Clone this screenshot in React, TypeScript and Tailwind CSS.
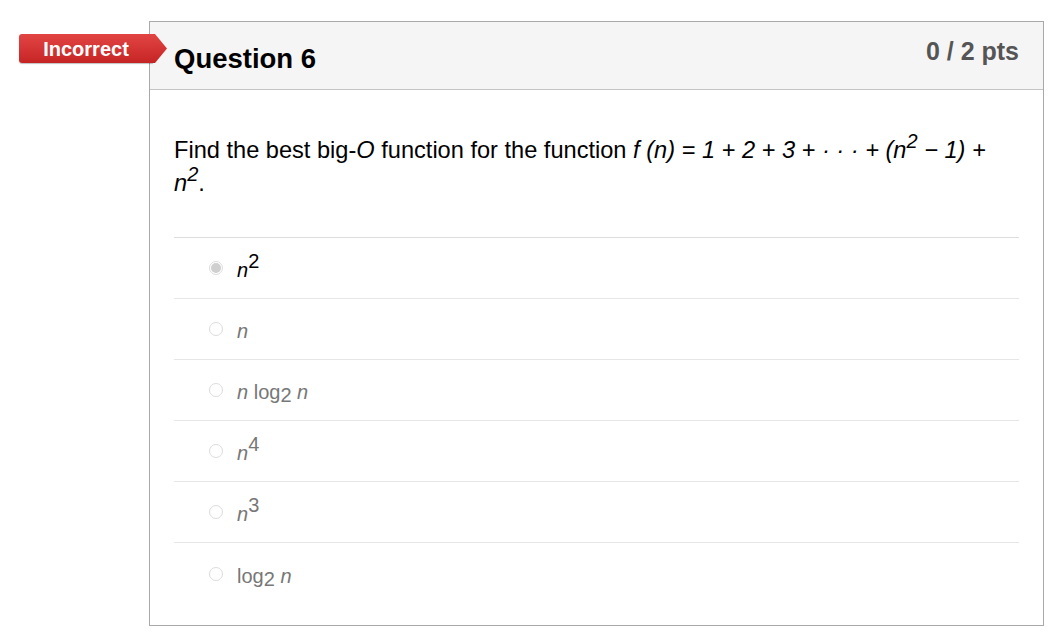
import React from "react";

type Answer = { key: string; selected?: boolean; content: React.ReactNode };

const Sup = ({ children }: { children: React.ReactNode }) => (
  <sup className="relative -top-[9px] text-[20px] not-italic">{children}</sup>
);

const answers: Answer[] = [
  {
    key: "n2",
    selected: true,
    content: (
      <>
        <i>n</i>
        <Sup>2</Sup>
      </>
    ),
  },
  { key: "n", content: <i>n</i> },
  {
    key: "nlog",
    content: (
      <>
        <i>n</i> log<span className="relative top-[3px]">2</span> <i>n</i>
      </>
    ),
  },
  {
    key: "n4",
    content: (
      <>
        <i>n</i>
        <Sup>4</Sup>
      </>
    ),
  },
  {
    key: "n3",
    content: (
      <>
        <i>n</i>
        <Sup>3</Sup>
      </>
    ),
  },
  {
    key: "log",
    content: (
      <>
        log<span className="relative top-[3px]">2</span> <i>n</i>
      </>
    ),
  },
];

function Radio({ selected }: { selected?: boolean }) {
  return (
    <span className="flex h-[14px] w-[14px] shrink-0 items-center justify-center rounded-full border border-[#dcdcdc] bg-white">
      {selected && <span className="h-[10px] w-[10px] rounded-full bg-[#cfcfcf]" />}
    </span>
  );
}

export default function App() {
  return (
    <div className="relative min-h-[641px] w-[1063px] bg-white font-['Liberation_Sans',Arial,sans-serif]">
      {/* Incorrect badge */}
      <div className="absolute left-[19px] top-[34px] z-10 flex h-[29px]">
        <div className="flex w-[134px] items-center justify-center rounded-l-[3px] bg-gradient-to-b from-[#e24444] to-[#c62424] text-[20px] font-bold text-white shadow-[0_1px_1px_rgba(0,0,0,0.25)]">
          Incorrect
        </div>
        <svg width="14" height="29" viewBox="0 0 14 29" className="block">
          <defs>
            <linearGradient id="bg" x1="0" y1="0" x2="0" y2="1">
              <stop offset="0" stopColor="#e24444" />
              <stop offset="1" stopColor="#c62424" />
            </linearGradient>
          </defs>
          <path d="M0 0 L2 0 L14 14.5 L2 29 L0 29 Z" fill="url(#bg)" />
        </svg>
      </div>

      <div className="ml-[149px] pt-[21px]">
        <div className="flex h-[605px] w-[895px] flex-col border border-[#a9a9a9]">
          {/* Header */}
          <div className="flex h-[68px] items-center justify-between border-b border-[#c4c4c4] bg-[#f5f5f5] px-[24px]">
            <h2 className="mt-[6px] text-[27.5px] font-bold text-black">Question 6</h2>
            <span className="mb-[8px] text-[25px] font-bold text-[#555555]">0 / 2 pts</span>
          </div>

          {/* Body */}
          <div className="px-[24px] pt-[44px]">
            <p className="text-[23.6px] leading-[33px] text-black">
              Find the best big-<i>O</i> function for the function{" "}
              <i>
                f (n) = 1 + 2 + 3 + · · · + (n<sup className="text-[20px]">2</sup> − 1) +
              </i>
              <br />
              <i>
                n<sup className="text-[20px]">2</sup>
              </i>
              .
            </p>

            <div className="mt-[37px] border-t border-[#dddddd]">
              {answers.map((a, i) => (
                <div
                  key={a.key}
                  className={`flex h-[61px] items-center gap-[14px] pl-[35px] ${
                    i < answers.length - 1 ? "border-b border-[#e6e6e6]" : ""
                  }`}
                >
                  <Radio selected={a.selected} />
                  <span
                    className={`mt-[4px] text-[20px] leading-none ${
                      a.selected ? "text-black" : "text-[#777777]"
                    }`}
                  >
                    {a.content}
                  </span>
                </div>
              ))}
            </div>
          </div>
        </div>
      </div>
    </div>
  );
}
